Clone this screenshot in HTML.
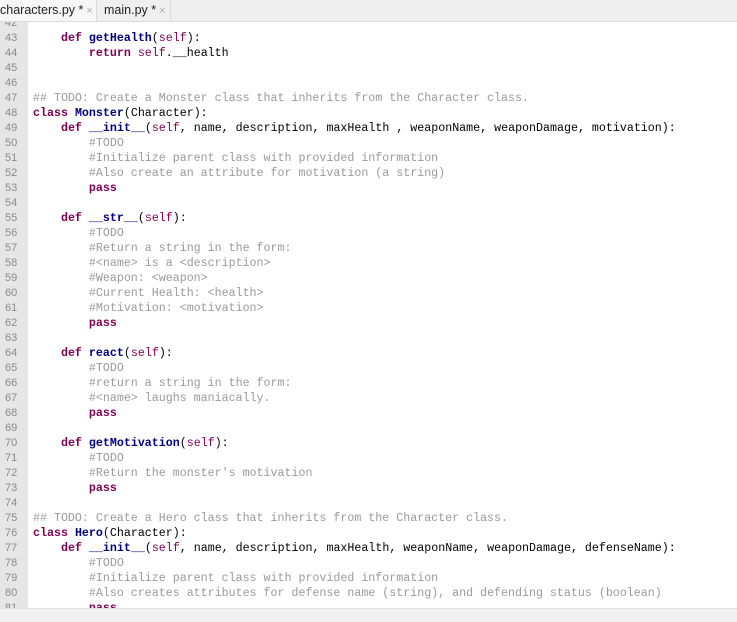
<!DOCTYPE html><html><head><style>
body{margin:0;width:737px;height:621px;overflow:hidden;background:#fff;font-family:"Liberation Sans",sans-serif;position:relative}
.tabs{position:absolute;left:0;top:0;width:737px;height:21px;background:#efefef;border-bottom:1px solid #dcdcdc}
.tab{position:absolute;top:0;height:21px;font-size:12.5px;line-height:21px;color:#222}
.tab .x{color:#aaa;font-size:11px;margin-left:3px}
.gut{position:absolute;left:0;top:22px;width:28px;height:586px;background:#e6e6e6}
.code{position:absolute;left:0;width:737px;font-family:"Liberation Mono",monospace;font-size:11.65px;line-height:15px;color:#000}
.clip{position:absolute;left:0;top:22px;width:737px;height:586px;overflow:hidden}
.l{height:15px;position:relative}
.n{position:absolute;left:5px;color:#8a8a8a;font-family:"Liberation Sans",sans-serif;font-size:11px}
.t{position:absolute;left:33px;white-space:pre}
.k{color:#7f0055;font-weight:bold}
.s{color:#7f0055}
.f{color:#000080;font-weight:bold}
.c{color:#9a9a9a}
.bot{position:absolute;left:0;top:608px;width:737px;height:13px;background:#f0f0f0;border-top:1px solid #e0e0e0}
</style></head><body>
<div class="tabs">
<div class="tab" style="left:0;width:96px;background:#f7f7f7;border-right:1px solid #dcdcdc">characters.py *<span class="x">×</span></div>
<div class="tab" style="left:97px;width:74px;padding-left:7px;box-sizing:border-box;border-right:1px solid #dcdcdc">main.py *<span class="x">×</span></div>
</div>
<div class="gut"></div>
<div class="clip"><div class="code" style="top:-6.5px">
<div class="l"><span class="n">42</span></div>
<div class="l"><span class="n">43</span><span class="t">    <span class="k">def</span> <span class="f">getHealth</span>(<span class="s">self</span>):</span></div>
<div class="l"><span class="n">44</span><span class="t">        <span class="k">return</span> <span class="s">self</span>.__health</span></div>
<div class="l"><span class="n">45</span></div>
<div class="l"><span class="n">46</span></div>
<div class="l"><span class="n">47</span><span class="t"><span class="c">## TODO: Create a Monster class that inherits from the Character class.</span></span></div>
<div class="l"><span class="n">48</span><span class="t"><span class="k">class</span> <span class="f">Monster</span>(Character):</span></div>
<div class="l"><span class="n">49</span><span class="t">    <span class="k">def</span> <span class="f">__init__</span>(<span class="s">self</span>, name, description, maxHealth , weaponName, weaponDamage, motivation):</span></div>
<div class="l"><span class="n">50</span><span class="t">        <span class="c">#TODO</span></span></div>
<div class="l"><span class="n">51</span><span class="t">        <span class="c">#Initialize parent class with provided information</span></span></div>
<div class="l"><span class="n">52</span><span class="t">        <span class="c">#Also create an attribute for motivation (a string)</span></span></div>
<div class="l"><span class="n">53</span><span class="t">        <span class="k">pass</span></span></div>
<div class="l"><span class="n">54</span></div>
<div class="l"><span class="n">55</span><span class="t">    <span class="k">def</span> <span class="f">__str__</span>(<span class="s">self</span>):</span></div>
<div class="l"><span class="n">56</span><span class="t">        <span class="c">#TODO</span></span></div>
<div class="l"><span class="n">57</span><span class="t">        <span class="c">#Return a string in the form:</span></span></div>
<div class="l"><span class="n">58</span><span class="t">        <span class="c">#&lt;name&gt; is a &lt;description&gt;</span></span></div>
<div class="l"><span class="n">59</span><span class="t">        <span class="c">#Weapon: &lt;weapon&gt;</span></span></div>
<div class="l"><span class="n">60</span><span class="t">        <span class="c">#Current Health: &lt;health&gt;</span></span></div>
<div class="l"><span class="n">61</span><span class="t">        <span class="c">#Motivation: &lt;motivation&gt;</span></span></div>
<div class="l"><span class="n">62</span><span class="t">        <span class="k">pass</span></span></div>
<div class="l"><span class="n">63</span></div>
<div class="l"><span class="n">64</span><span class="t">    <span class="k">def</span> <span class="f">react</span>(<span class="s">self</span>):</span></div>
<div class="l"><span class="n">65</span><span class="t">        <span class="c">#TODO</span></span></div>
<div class="l"><span class="n">66</span><span class="t">        <span class="c">#return a string in the form:</span></span></div>
<div class="l"><span class="n">67</span><span class="t">        <span class="c">#&lt;name&gt; laughs maniacally.</span></span></div>
<div class="l"><span class="n">68</span><span class="t">        <span class="k">pass</span></span></div>
<div class="l"><span class="n">69</span></div>
<div class="l"><span class="n">70</span><span class="t">    <span class="k">def</span> <span class="f">getMotivation</span>(<span class="s">self</span>):</span></div>
<div class="l"><span class="n">71</span><span class="t">        <span class="c">#TODO</span></span></div>
<div class="l"><span class="n">72</span><span class="t">        <span class="c">#Return the monster's motivation</span></span></div>
<div class="l"><span class="n">73</span><span class="t">        <span class="k">pass</span></span></div>
<div class="l"><span class="n">74</span></div>
<div class="l"><span class="n">75</span><span class="t"><span class="c">## TODO: Create a Hero class that inherits from the Character class.</span></span></div>
<div class="l"><span class="n">76</span><span class="t"><span class="k">class</span> <span class="f">Hero</span>(Character):</span></div>
<div class="l"><span class="n">77</span><span class="t">    <span class="k">def</span> <span class="f">__init__</span>(<span class="s">self</span>, name, description, maxHealth, weaponName, weaponDamage, defenseName):</span></div>
<div class="l"><span class="n">78</span><span class="t">        <span class="c">#TODO</span></span></div>
<div class="l"><span class="n">79</span><span class="t">        <span class="c">#Initialize parent class with provided information</span></span></div>
<div class="l"><span class="n">80</span><span class="t">        <span class="c">#Also creates attributes for defense name (string), and defending status (boolean)</span></span></div>
<div class="l"><span class="n">81</span><span class="t">        <span class="k">pass</span></span></div>
</div></div>
<div class="bot"></div>
</body></html>
